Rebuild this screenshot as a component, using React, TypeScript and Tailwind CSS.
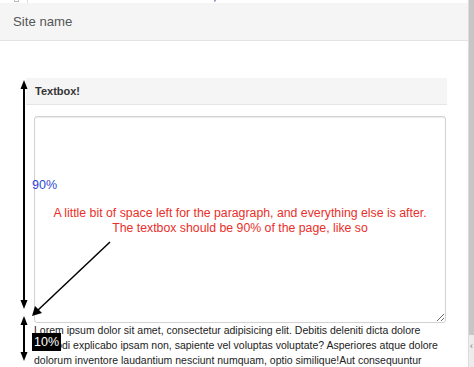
import React from 'react';

const para =
  'Lorem ipsum dolor sit amet, consectetur adipisicing elit. Debitis deleniti dicta dolore Nemodi explicabo ipsam non, sapiente vel voluptas voluptate? Asperiores atque dolore dolorum inventore laudantium nesciunt numquam, optio similique!Aut consequuntur necessitatibus quas, eveniet fugit reiciendis ipsum ad cumque.';

function Annotations() {
  return (
    <svg className="pointer-events-none absolute inset-0" width={474} height={367}>
      {/* 90% arrow */}
      <line x1={24} y1={86} x2={24} y2={302} stroke="#000" strokeWidth={2} />
      <polygon points="24,80 20.5,89 27.5,89" fill="#000" />
      <polygon points="24,309 20.5,300 27.5,300" fill="#000" />
      {/* 10% arrow */}
      <line x1={24} y1={322} x2={24} y2={355} stroke="#000" strokeWidth={2} />
      <polygon points="24,316 20.5,325 27.5,325" fill="#000" />
      <polygon points="24,361 20.5,352 27.5,352" fill="#000" />
      {/* pointer */}
      <line x1={110} y1={242} x2={37} y2={311} stroke="#000" strokeWidth={1.5} />
      <polygon points="32,316 35,306 42,313" fill="#000" />
    </svg>
  );
}

export default function App() {
  return (
    <div className="relative flex h-[367px] w-[474px] overflow-hidden bg-white font-['Liberation_Sans',Arial,sans-serif]">
      <div className="flex min-w-0 flex-1 flex-col">
        {/* code editor strip, mostly cut off */}
        <div className="flex h-[3px] shrink-0 overflow-hidden bg-white">
          <div className="ml-[14px] mt-[-6px] h-[8px] w-[5px] border border-[#bbb]" />
          <div className="ml-[8px] h-[3px] w-px bg-[#ddd]" />
          <div className="ml-[39px] mt-[-9px] whitespace-pre font-['Liberation_Mono',monospace] text-[11px] leading-[12px] text-[#222]">
            border-radius: <span className="text-[#2a2aa8]">inherit;</span>
          </div>
        </div>

        {/* navbar */}
        <div className="flex h-[38px] shrink-0 items-center border-b border-[#e3e3e3] bg-[#f5f5f5] pl-[13px]">
          <span className="text-[13.2px] text-[#555]">Site name</span>
        </div>

        <div className="shrink-0 pt-[37px]">
          <div className="ml-[26px] w-[421px]">
            <div className="flex h-[27px] items-center border-b border-[#e6e6e6] bg-[#f5f5f5] px-[9px]">
              <span className="text-[11px] font-bold text-[#333]">Textbox!</span>
            </div>
            <div className="pl-[8px] pr-px pt-[11px]">
              <div className="relative">
                <textarea
                  readOnly
                  className="block h-[207px] w-full rounded-[3px] border border-[#d2d2d2] bg-white shadow-[inset_0_1px_1px_rgba(0,0,0,0.08)] outline-none"
                />
                <div className="pointer-events-none absolute left-0 right-0 top-[90px] text-center text-[12.3px] leading-[15px] text-[#ea2f2b]">
                  A little bit of space left for the paragraph, and everything else is after.
                  <br />
                  The textbox should be 90% of the page, like so
                </div>
              </div>
              <p className="mt-0 text-[10.5px] leading-[15px] text-[#222]">{para}</p>
            </div>
          </div>
        </div>
      </div>

      {/* side scrollbar / splitter */}
      <div className="flex w-[6px] flex-col border-l border-[#dcdcdc]">
        <div className="flex-1 bg-[#c6c6c6]" />
        <div className="flex h-[32px] items-start justify-center bg-[#ececec] pt-[6px] text-[9px] leading-[10px] text-[#777]">
          ‹
        </div>
      </div>

      <div className="absolute left-[32px] top-[178px] text-[12.5px] leading-[15px] text-[#2f47d8]">90%</div>
      <div className="absolute left-[32px] top-[333px] bg-black px-[2px] text-[12.5px] leading-[18px] text-white">10%</div>

      <Annotations />
    </div>
  );
}
